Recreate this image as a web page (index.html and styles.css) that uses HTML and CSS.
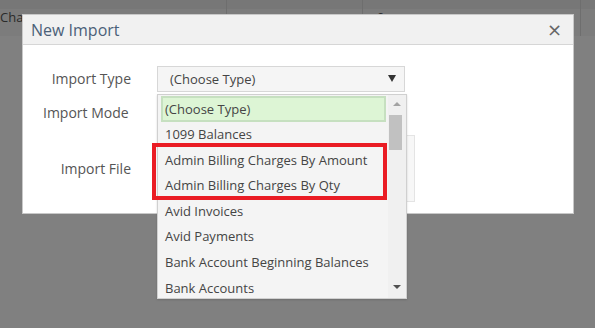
FILE: index.html
```html
<!DOCTYPE html>
<html lang="en">
<head>
    <meta charset="UTF-8">
    <title>New Import</title>
    <link rel="stylesheet" href="styles.css">
</head>
<body>
    <div class="page">
        <table class="grid">
            <tr class="row-top">
                <td class="c1"></td><td class="c2"></td><td class="c3"></td><td class="c4"></td>
            </tr>
            <tr class="row-data">
                <td class="c1">Charges</td><td class="c2"></td><td class="c3">0</td><td class="c4">174</td>
            </tr>
        </table>
    </div>

    <div class="modal">
        <div class="modal-header">
            <span class="modal-title">New Import</span>
            <span class="close">&times;</span>
        </div>
        <div class="modal-body">
            <div class="form-row">
                <label>Import Type</label>
                <div class="select">
                    <span>(Choose Type)</span>
                    <span class="caret"></span>
                </div>
            </div>
            <div class="form-row mode">
                <label>Import Mode</label>
            </div>
            <div class="form-row file">
                <label>Import File</label>
                <div class="file-box"></div>
            </div>
        </div>
    </div>

    <div class="dropdown">
        <ul class="options">
            <li class="selected">(Choose Type)</li>
            <li>1099 Balances</li>
            <li>Admin Billing Charges By Amount</li>
            <li>Admin Billing Charges By Qty</li>
            <li>Avid Invoices</li>
            <li>Avid Payments</li>
            <li>Bank Account Beginning Balances</li>
            <li>Bank Accounts</li>
        </ul>
        <div class="scrollbar">
            <span class="arrow-up"></span>
            <span class="thumb"></span>
            <span class="arrow-down"></span>
        </div>
    </div>

    <div class="highlight"></div>
</body>
</html>
```

FILE: styles.css
```css
body {
    margin: 0;
    width: 595px;
    height: 328px;
    overflow: hidden;
    background: #808080;
    font-family: "Open Sans", "Liberation Sans", sans-serif;
    position: relative;
}
.grid {
    border-collapse: collapse;
    table-layout: fixed;
    width: 100%;
    color: #2a2a2a;
    font-size: 13px;
}
.grid td {
    padding: 0;
    border-right: 1px solid #6e6e6e;
}
.grid td.c4 {
    border-right: none;
}
.row-top td {
    height: 9px;
    background: #777;
}
.row-data td {
    height: 27px;
    background: #7c7c7c;
    vertical-align: top;
    line-height: 16px;
}
.c1 { width: 226px; }
.c2 { width: 135px; }
.c3 { width: 203px; padding-left: 14px !important; }
.c4 { padding-left: 13px !important; }

.modal {
    position: absolute;
    left: 22px;
    top: 14px;
    width: 550px;
    height: 198px;
    background: #fff;
    border: 1px solid #c8c8c8;
}
.modal-header {
    height: 29px;
    background: #f1f1f1;
    border-bottom: 1px solid #d6d6d6;
    display: flex;
    align-items: center;
    justify-content: space-between;
    padding: 0 11px 0 8px;
}
.modal-title {
    font-size: 16px;
    color: #4b6078;
}
.close {
    font-family: "DejaVu Sans", sans-serif;
    font-size: 18px;
    color: #666;
    line-height: 1;
}
.modal-body {
    padding-top: 20px;
}
.form-row {
    display: flex;
    align-items: center;
    height: 27px;
}
.form-row label {
    width: 108px;
    text-align: right;
    font-size: 14px;
    color: #555;
    margin-right: 26px;
}
.form-row.mode {
    margin-top: 7px;
}
.form-row.mode label {
    text-align: left;
    padding-left: 20px;
    box-sizing: border-box;
}
.form-row.file {
    margin-top: 9px;
    height: 67px;
}
.form-row.file label {
    padding-left: 5px;
    box-sizing: border-box;
}
.select {
    width: 248px;
    height: 26px;
    box-sizing: border-box;
    border: 1px solid #d7d7d7;
    background: #f5f5f5;
    display: flex;
    align-items: center;
    justify-content: space-between;
    padding: 0 8px 0 12px;
    font-size: 13px;
    color: #444;
}
.caret {
    width: 0;
    height: 0;
    border-left: 4px solid transparent;
    border-right: 4px solid transparent;
    border-top: 7px solid #333;
}
.file-box {
    width: 258px;
    height: 67px;
    box-sizing: border-box;
    border: 1px solid #e4e4e4;
    background: #f7f7f7;
}

.dropdown {
    position: absolute;
    left: 157px;
    top: 94px;
    width: 250px;
    height: 205px;
    box-sizing: border-box;
    border: 1px solid #d0d0d0;
    background: #f4f4f4;
    display: flex;
    box-shadow: 0 1px 2px rgba(0, 0, 0, 0.15);
}
.options {
    list-style: none;
    margin: 0;
    padding: 1px 0 0 3px;
    flex: 1;
}
.options li {
    height: 25.6px;
    line-height: 25.6px;
    font-size: 13px;
    color: #454545;
    padding-left: 4px;
    white-space: nowrap;
}
.options li.selected {
    background: #ddf5d5;
    border: 2px solid #c6e0c0;
    height: 22px;
    line-height: 22px;
    padding-left: 2px;
    margin-right: 2px;
}
.scrollbar {
    width: 18px;
    background: #f0f0f0;
    position: relative;
}
.arrow-up,
.arrow-down {
    position: absolute;
    left: 5px;
    width: 0;
    height: 0;
    border-left: 4px solid transparent;
    border-right: 4px solid transparent;
}
.arrow-up {
    top: 7px;
    border-bottom: 4px solid #a3a3a3;
}
.arrow-down {
    bottom: 9px;
    border-top: 4px solid #505050;
}
.thumb {
    position: absolute;
    left: 1px;
    top: 20px;
    width: 13px;
    height: 35px;
    background: #c1c1c1;
}

.highlight {
    position: absolute;
    left: 152px;
    top: 143px;
    width: 235px;
    height: 57px;
    box-sizing: border-box;
    border: 4px solid #ea1c24;
}
```
